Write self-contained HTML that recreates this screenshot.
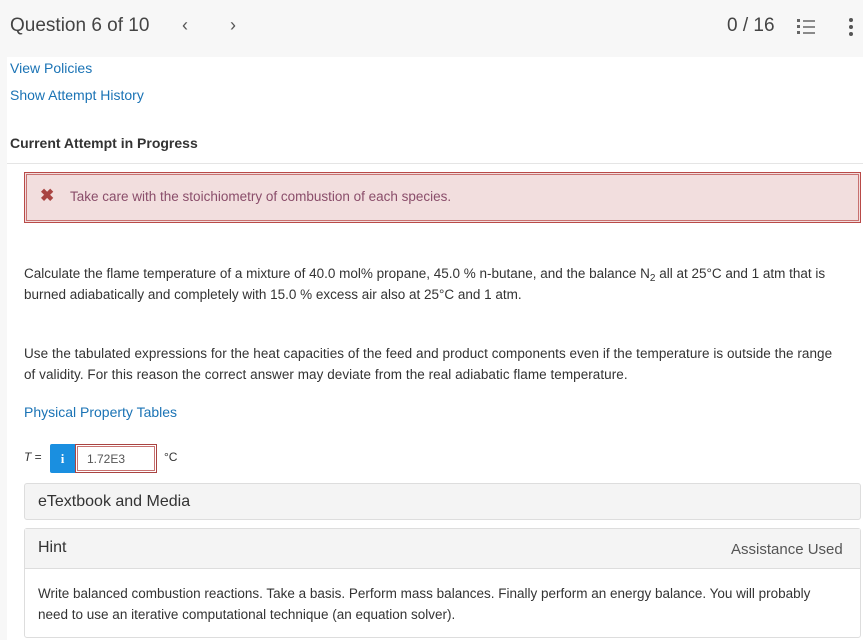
<!DOCTYPE html>
<html><head><meta charset="utf-8"><style>
*{margin:0;padding:0;box-sizing:border-box}
body{width:863px;height:640px;overflow:hidden;background:#fff;font-family:"Liberation Sans",sans-serif;color:#333;position:relative}
.a{position:absolute;white-space:nowrap}
a{color:#1a73b5;text-decoration:none}
sub{font-size:10px;line-height:0;vertical-align:-3px}
</style></head><body>
<div class="a" style="left:0;top:0;width:863px;height:57px;background:#f7f7f7"></div>
<div class="a" style="left:0;top:57px;width:7px;height:583px;background:#f7f7f7"></div>
<div class="a" style="left:10px;top:15px;font-size:19px;color:#444">Question 6 of 10</div>
<div class="a" style="left:182px;top:15px;font-size:18px;color:#555">‹</div>
<div class="a" style="left:230px;top:15px;font-size:18px;color:#555">›</div>
<div class="a" style="left:727px;top:15px;font-size:19px;color:#444">0 / 16</div>
<svg class="a" style="left:796px;top:18px" width="20" height="18"><g stroke="#666" stroke-width="1.5"><line x1="7" y1="3" x2="19" y2="3"/><line x1="7" y1="9" x2="19" y2="9"/><line x1="7" y1="15" x2="19" y2="15"/></g><g fill="#666"><rect x="1" y="1" width="3" height="3"/><rect x="1" y="7" width="3" height="3"/><rect x="1" y="13" width="3" height="3"/></g></svg>
<svg class="a" style="left:848px;top:17px" width="6" height="20"><circle cx="3" cy="3" r="2" fill="#555"/><circle cx="3" cy="10" r="2" fill="#555"/><circle cx="3" cy="17" r="2" fill="#555"/></svg>
<a class="a" style="left:10px;top:60px;font-size:14px">View Policies</a>
<a class="a" style="left:10px;top:87px;font-size:14px">Show Attempt History</a>
<div class="a" style="left:10px;top:135px;font-size:14px;font-weight:bold;color:#333">Current Attempt in Progress</div>
<div class="a" style="left:7px;top:163px;width:856px;height:1px;background:#e5e5e5"></div>
<div class="a" style="left:24px;top:172px;width:837px;height:51px;background:#f2dede;border:1px solid #b94a48;box-shadow:inset 0 0 0 1px #f2dede,inset 0 0 0 2px #c87170"></div>
<div class="a" style="left:40px;top:186px;font-size:17px;font-weight:bold;color:#a94442">✖</div>
<div class="a" style="left:70px;top:189px;font-size:13.5px;color:#8a4d6a">Take care with the stoichiometry of combustion of each species.</div>
<div class="a" style="left:24px;top:263px;font-size:13.5px;line-height:21px;color:#333">Calculate the flame temperature of a mixture of 40.0 mol% propane, 45.0 % n-butane, and the balance N<sub>2</sub> all at 25°C and 1 atm that is<br>burned adiabatically and completely with 15.0 % excess air also at 25°C and 1 atm.</div>
<div class="a" style="left:24px;top:343px;font-size:13.5px;line-height:21px;color:#333;letter-spacing:0.05px">Use the tabulated expressions for the heat capacities of the feed and product components even if the temperature is outside the range<br>of validity. For this reason the correct answer may deviate from the real adiabatic flame temperature.</div>
<a class="a" style="left:24px;top:404px;font-size:14px">Physical Property Tables</a>
<div class="a" style="left:24px;top:450px;font-size:12px;font-style:italic">T <span style="font-style:normal">=</span></div>
<div class="a" style="left:50px;top:444px;width:25px;height:29px;background:#1a8fe0;border-radius:2px 0 0 2px;color:#fff;font-weight:bold;font-size:13px;text-align:center;line-height:29px;font-family:'Liberation Serif',serif">i</div>
<div class="a" style="left:75px;top:444px;width:82px;height:29px;border:1px solid #a94442;box-shadow:inset 0 0 0 1px #fff,inset 0 0 0 2px #c87170;font-size:12px;color:#555;padding:7px 0 0 11px">1.72E3</div>
<div class="a" style="left:164px;top:450px;font-size:12px">°C</div>
<div class="a" style="left:24px;top:483px;width:837px;height:37px;background:#f4f4f4;border:1px solid #ddd;border-radius:3px"></div>
<div class="a" style="left:38px;top:493px;font-size:16px;color:#333">eTextbook and Media</div>
<div class="a" style="left:24px;top:528px;width:837px;height:110px;border:1px solid #ddd;border-radius:3px;background:#fff"></div>
<div class="a" style="left:25px;top:529px;width:835px;height:40px;background:#f4f4f4;border-bottom:1px solid #ddd"></div>
<div class="a" style="left:38px;top:539px;font-size:16px;color:#333">Hint</div>
<div class="a" style="left:731px;top:541px;font-size:15px;color:#555">Assistance Used</div>
<div class="a" style="left:38px;top:583px;font-size:13.5px;line-height:21px;color:#333">Write balanced combustion reactions. Take a basis. Perform mass balances. Finally perform an energy balance. You will probably<br>need to use an iterative computational technique (an equation solver).</div>
</body></html>
